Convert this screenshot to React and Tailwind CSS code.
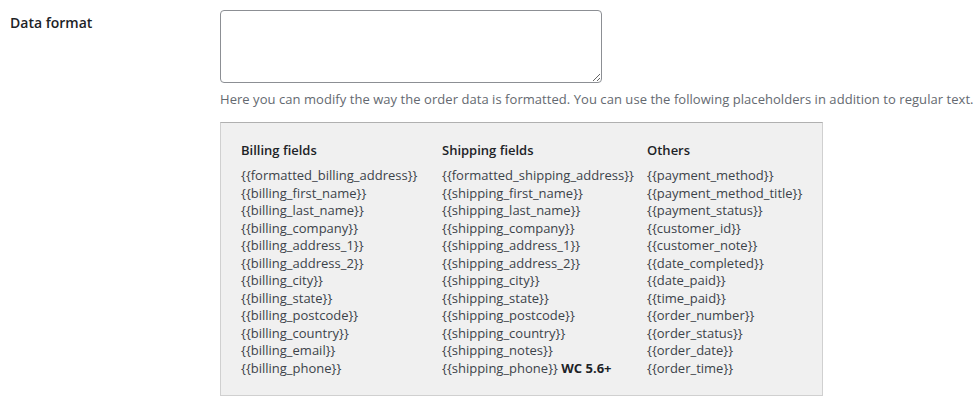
import React from "react";

const billing = [
  "{{formatted_billing_address}}",
  "{{billing_first_name}}",
  "{{billing_last_name}}",
  "{{billing_company}}",
  "{{billing_address_1}}",
  "{{billing_address_2}}",
  "{{billing_city}}",
  "{{billing_state}}",
  "{{billing_postcode}}",
  "{{billing_country}}",
  "{{billing_email}}",
  "{{billing_phone}}",
];
const shipping = [
  "{{formatted_shipping_address}}",
  "{{shipping_first_name}}",
  "{{shipping_last_name}}",
  "{{shipping_company}}",
  "{{shipping_address_1}}",
  "{{shipping_address_2}}",
  "{{shipping_city}}",
  "{{shipping_state}}",
  "{{shipping_postcode}}",
  "{{shipping_country}}",
  "{{shipping_notes}}",
];
const others = [
  "{{payment_method}}",
  "{{payment_method_title}}",
  "{{payment_status}}",
  "{{customer_id}}",
  "{{customer_note}}",
  "{{date_completed}}",
  "{{date_paid}}",
  "{{time_paid}}",
  "{{order_number}}",
  "{{order_status}}",
  "{{order_date}}",
  "{{order_time}}",
];

function Col({ title, items, extra, className }) {
  return (
    <div className={"flex flex-col " + className}>
      <div className="font-semibold text-[#1d2327] leading-[17px] mb-[8px]">{title}</div>
      {items.map((t) => (
        <div key={t} className="leading-[17.5px] whitespace-nowrap">{t}</div>
      ))}
      {extra}
    </div>
  );
}

export default function App() {
  return (
    <div
      className="bg-white w-[980px] h-[407px] text-[13px] text-[#3c434a] overflow-hidden"
      style={{ fontFamily: '"Open Sans", "Noto Sans", sans-serif' }}
    >
      <div className="flex pt-[10px]">
        <div className="w-[220px] pl-[10px] pt-[6px] text-[14px] font-semibold text-[#1d2327] leading-[14px]">
          Data format
        </div>
        <div className="flex flex-col">
          <textarea className="w-[382px] h-[73px] border border-[#8c8f94] rounded-[4px] bg-white block outline-none" />
          <p className="mt-[8px] text-[#646970] leading-[17px] whitespace-nowrap tracking-[0.05px]">
            Here you can modify the way the order data is formatted. You can use the following placeholders in addition to regular text.
          </p>
          <div className="mt-[14px] self-start bg-[#f0f0f0] border border-[#d0d0d0] border-t-[#b0b0b0] pt-[19px] pb-[18px] pl-[20px] pr-[20px] flex">
            <Col className="w-[201px]" title="Billing fields" items={billing} />
            <Col
              className="w-[205px]"
              title="Shipping fields"
              items={shipping}
              extra={
                <div className="leading-[17.5px] whitespace-nowrap">
                  {"{{shipping_phone}}"} <span className="font-bold text-[#1d2327]">WC 5.6+</span>
                </div>
              }
            />
            <Col className="" title="Others" items={others} />
          </div>
        </div>
      </div>
    </div>
  );
}
